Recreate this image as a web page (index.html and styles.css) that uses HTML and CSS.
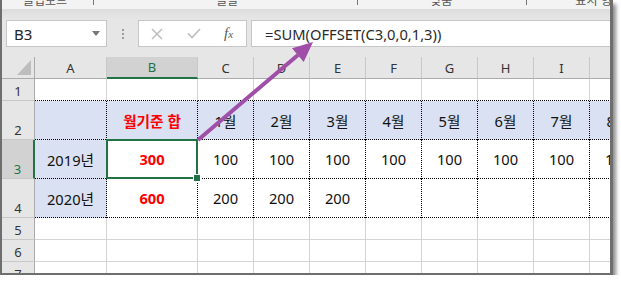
FILE: index.html
```html
<!DOCTYPE html>
<html lang="ko">
<head>
<meta charset="utf-8">
<title>OFFSET</title>
<link rel="stylesheet" href="styles.css">
</head>
<body>
<div class="window">
  <div class="ribbon">
    <span class="grp g1">클립보드</span><span class="launch l1"></span>
    <span class="grp g2">글꼴</span><span class="launch l2"></span>
    <span class="grp g3">맞춤</span><span class="launch l3"></span>
    <span class="grp g4">표시 형식</span>
  </div>
  <div class="fbar">
    <div class="namebox"><span class="ref">B3</span><span class="dd"></span></div>
    <div class="grip"><i></i><i></i><i></i></div>
    <div class="btns">
      <svg class="ic-x" width="12" height="12" viewBox="0 0 12 12"><path d="M1 1 L11 11 M11 1 L1 11" stroke="#bdbdbd" stroke-width="1.5" fill="none"/></svg>
      <svg class="ic-ok" width="14" height="11" viewBox="0 0 14 11"><path d="M1 5.5 L5 9.5 L13 1" stroke="#bdbdbd" stroke-width="1.6" fill="none"/></svg>
      <span class="fx">f<span class="x">x</span></span>
    </div>
    <div class="formula">=SUM(OFFSET(C3,0,0,1,3))</div>
  </div>
  <div class="sheet">
    <div class="corner"><span class="tri"></span></div>
    <div class="ch">A</div><div class="ch sel-ch">B</div><div class="ch">C</div><div class="ch">D</div><div class="ch">E</div><div class="ch">F</div><div class="ch">G</div><div class="ch">H</div><div class="ch">I</div><div class="ch">J</div>

    <div class="rh">1</div>
    <div class="c db"></div><div class="c db"></div><div class="c db"></div><div class="c db"></div><div class="c db"></div><div class="c db"></div><div class="c db"></div><div class="c db"></div><div class="c db"></div><div class="c db"></div>

    <div class="rh">2</div>
    <div class="c dt blue"></div><div class="c dt blue red">월기준 합</div><div class="c dt blue">1월</div><div class="c dt blue">2월</div><div class="c dt blue">3월</div><div class="c dt blue">4월</div><div class="c dt blue">5월</div><div class="c dt blue">6월</div><div class="c dt blue">7월</div><div class="c dt blue">8월</div>

    <div class="rh sel-rh">3</div>
    <div class="c dt blue">2019년</div><div class="c dt red active">300</div><div class="c dt">100</div><div class="c dt">100</div><div class="c dt">100</div><div class="c dt">100</div><div class="c dt">100</div><div class="c dt">100</div><div class="c dt">100</div><div class="c dt">100</div>

    <div class="rh">4</div>
    <div class="c dt blue">2020년</div><div class="c dt red">600</div><div class="c dt">200</div><div class="c dt">200</div><div class="c dt">200</div><div class="c dt"></div><div class="c dt"></div><div class="c dt"></div><div class="c dt"></div><div class="c dt"></div>

    <div class="rh">5</div>
    <div class="c"></div><div class="c"></div><div class="c"></div><div class="c"></div><div class="c"></div><div class="c"></div><div class="c"></div><div class="c"></div><div class="c"></div><div class="c"></div>

    <div class="rh">6</div>
    <div class="c"></div><div class="c"></div><div class="c"></div><div class="c"></div><div class="c"></div><div class="c"></div><div class="c"></div><div class="c"></div><div class="c"></div><div class="c"></div>

    <div class="rh">7</div>
    <div class="c"></div><div class="c"></div><div class="c"></div><div class="c"></div><div class="c"></div><div class="c"></div><div class="c"></div><div class="c"></div><div class="c"></div><div class="c"></div>
  </div>
  <svg class="arrow" width="615" height="275" viewBox="0 0 615 275">
    <line x1="198" y1="140" x2="298" y2="55" stroke="#a04fa9" stroke-width="4"/>
    <polygon points="313,42 303.7,61.9 292,48.2" fill="#a04fa9"/>
  </svg>
</div>
</body>
</html>
```
FILE: styles.css
```css
* { box-sizing: border-box; }
html, body { margin: 0; padding: 0; background: #fff; }
body { font-family: "Noto Sans", "Noto Sans CJK KR", sans-serif; }

.window {
  position: relative;
  width: 613px;
  height: 275px;
  border-left: 2px solid #6e6e6e;
  border-right: 3px solid #6e6e6e;
  border-bottom: 2px solid #6e6e6e;
  box-shadow: 3px 4px 4px rgba(0,0,0,0.45);
  overflow: hidden;
  background: #e6e6e6;
}

/* ribbon remnant */
.ribbon {
  height: 9px;
  background: #f3f3f3;
  display: flex;
  align-items: flex-start;
  overflow: hidden;
  font-family: "Noto Sans CJK KR", sans-serif;
  font-size: 12px;
  line-height: 12px;
  color: #555;
}
.grp { margin-top: -6px; white-space: nowrap; }
.g1 { margin-left: 21px; }
.g2 { margin-left: 122px; }
.g3 { margin-left: 72px; }
.g4 { margin-left: 48px; }
.launch {
  width: 6px; height: 5px;
  border-right: 1px solid #777;
  border-bottom: 1px solid #777;
}
.l1 { margin-left: 26px; }
.l2 { margin-left: 119px; }
.l3 { margin-left: 74px; }

/* formula bar */
.fbar {
  height: 48px;
  display: flex;
  align-items: flex-start;
  padding: 11px 0 0 4px;
  background: linear-gradient(#dcdcdc 0, #e3e3e3 6px, #e6e6e6 11px);
}
.namebox {
  width: 101px; height: 27px;
  background: #fff;
  border: 1px solid #c6c6c6;
  display: flex; align-items: center;
  padding: 0 6px 0 7px;
  font-size: 15px;
  color: #222;
}
.namebox .dd {
  margin-left: auto;
  width: 0; height: 0;
  border-left: 4px solid transparent;
  border-right: 4px solid transparent;
  border-top: 5px solid #777;
}
.grip {
  width: 31px; height: 27px;
  display: flex; flex-direction: column;
  align-items: center; justify-content: center; gap: 2px;
}
.grip i { display: block; width: 2px; height: 2px; background: #9c9c9c; }
.btns {
  width: 109px; height: 27px;
  background: #fff;
  border: 1px solid #c6c6c6;
  display: flex; align-items: center;
  padding-left: 12px;
}
.ic-ok { margin-left: 24px; }
.fx {
  margin-left: 23px;
  font-family: "Liberation Serif", serif;
  font-style: italic;
  font-size: 15px;
  color: #5a5a5a;
}
.fx .x { font-size: 11px; }
.formula {
  flex: 1; height: 27px;
  margin-left: 4px;
  background: #fff;
  border: 1px solid #c6c6c6;
  border-right: none;
  display: flex; align-items: center;
  padding-left: 13px;
  font-size: 14.7px;
  color: #2a2a2a;
  white-space: nowrap;
}

/* sheet grid */
.sheet {
  display: grid;
  grid-template-columns: 33px 72px 91px repeat(8, 56px);
  grid-template-rows: 22px 22px 39px 39px 39px 22px 22px 22px;
  background: #fff;
  font-size: 14.67px;
  color: #111;
}
.corner {
  background: #e6e6e6;
  border-right: 1px solid #ababab;
  border-bottom: 1px solid #ababab;
  position: relative;
}
.corner .tri {
  position: absolute;
  right: 3px; bottom: 3px;
  width: 0; height: 0;
  border-left: 14px solid transparent;
  border-bottom: 15px solid #bdbdbd;
}
.ch {
  background: #e6e6e6;
  border-right: 1px solid #c8c8c8;
  border-bottom: 1px solid #ababab;
  display: flex; align-items: center; justify-content: center;
  font-size: 13px;
  color: #333;
}
.sel-ch {
  background: #d2d2d2;
  color: #217346;
  border-bottom: 2px solid #217346;
}
.rh {
  background: #e6e6e6;
  border-right: 1px solid #ababab;
  border-bottom: 1px solid #c8c8c8;
  display: flex; align-items: flex-end; justify-content: center;
  font-size: 13px;
  line-height: 16px;
  padding-bottom: 1px;
  color: #333;
}
.sel-rh {
  background: #d2d2d2;
  color: #217346;
  border-right: 2px solid #217346;
}
.c {
  border-right: 1px solid #d4d4d4;
  border-bottom: 1px solid #d4d4d4;
  display: flex; align-items: center; justify-content: center;
  white-space: nowrap;
  background-repeat: no-repeat;
  background-origin: border-box;
}
.db {
  border-bottom-color: transparent;
  background-image: repeating-linear-gradient(to right, #000 0 1px, transparent 1px 2px);
  background-size: 100% 1px;
  background-position: left bottom;
}
.dt {
  border-right-color: transparent;
  border-bottom-color: transparent;
  background-image:
    repeating-linear-gradient(to bottom, #000 0 1px, transparent 1px 2px),
    repeating-linear-gradient(to right, #000 0 1px, transparent 1px 2px);
  background-size: 1px 100%, 100% 1px;
  background-position: right top, left bottom;
}
.blue { background-color: #d9e1f2; }
.red { color: #ff0000; font-weight: 700; }
.active { position: relative; z-index: 2; }
.active::after {
  content: "";
  position: absolute;
  inset: -1px;
  border: 2px solid #217346;
}
.active::before {
  content: "";
  position: absolute;
  right: -3px; bottom: -3px;
  width: 6px; height: 6px;
  background: #217346;
  box-shadow: 0 0 0 1px #fff;
  z-index: 3;
}

.arrow {
  position: absolute;
  left: -2px; top: 0;
  z-index: 5;
  pointer-events: none;
}
```
